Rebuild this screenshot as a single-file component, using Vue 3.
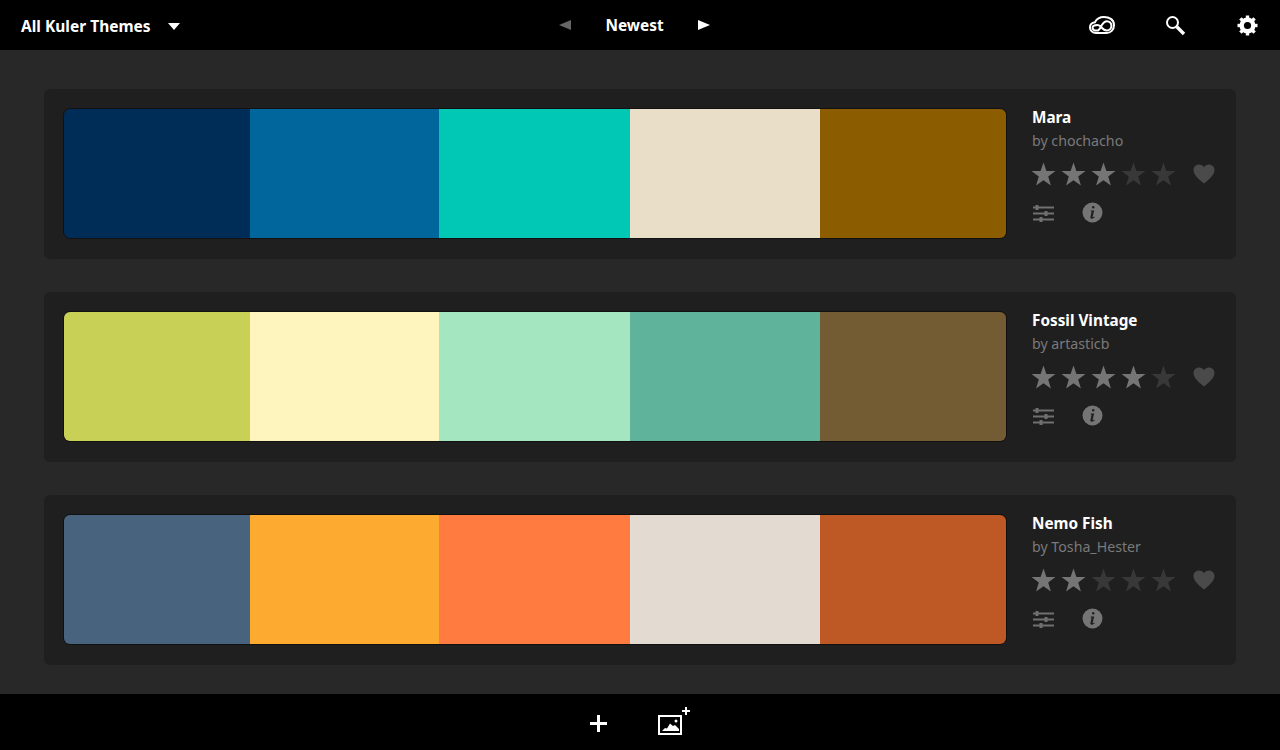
<script setup>
const themes = [
  { name: 'Mara', author: 'by chochacho', rating: 3, colors: ['#002c58', '#00669c', '#00c8b4', '#e9dec8', '#8c5c00'] },
  { name: 'Fossil Vintage', author: 'by artasticb', rating: 4, colors: ['#c8d055', '#fdf5bd', '#a3e6bf', '#5fb39a', '#735b33'] },
  { name: 'Nemo Fish', author: 'by Tosha_Hester', rating: 2, colors: ['#47637e', '#fdaa30', '#ff7b3f', '#e3dad2', '#be5925'] }
]
const star = 'M12.5 0.5 L15.4 9 L24.5 9 L17.2 14.5 L19.9 23.5 L12.5 18.2 L5.1 23.5 L7.8 14.5 L0.5 9 L9.6 9 Z'
</script>

<template>
  <div class="page">
    <header class="topbar">
      <div class="menu">
        <span class="menu-label">All Kuler Themes</span>
        <svg class="caret" width="12" height="7" viewBox="0 0 12 7"><path d="M0 0H12L6 7Z" fill="#fff" /></svg>
      </div>
      <div class="sorter">
        <svg width="12" height="10" viewBox="0 0 12 10"><path d="M0 5L12 0V10Z" fill="#666" /></svg>
        <span class="sort-label">Newest</span>
        <svg width="12" height="10" viewBox="0 0 12 10"><path d="M12 5L0 0V10Z" fill="#fff" /></svg>
      </div>
      <div class="tools">
        <svg class="cc" width="26" height="18" viewBox="0 0 26 18" fill="none" stroke="#fff" stroke-width="2">
          <path d="M7 17C3.5 17 1 14.5 1 11.5C1 8.5 3.2 6.5 6 6.2C7.5 3 11 1 15 1C20 1 25 3.5 25 9C25 14 21.5 17 17.5 17Z" />
          <path d="M8.5 9C10.8 9 11.8 10.6 13 12C14.2 13.4 15.6 14.4 17.8 14.4C20.4 14.4 22.4 12.4 22.4 9.8C22.4 7.2 20.4 5.2 17.8 5.2C15.4 5.2 14.2 7 13 8.8C11.8 10.6 10.6 14.6 8 14.6C5.4 14.6 3.6 13.4 3.6 11.7C3.6 10 6 9 8.5 9Z" stroke-width="2" />
        </svg>
        <svg class="search" width="21" height="21" viewBox="0 0 21 21" fill="none" stroke="#fff">
          <circle cx="7.5" cy="7.5" r="5.5" stroke-width="2" />
          <path d="M11.8 11.8L19 19" stroke-width="3.4" />
        </svg>
        <svg class="gear" width="21" height="21" viewBox="0 0 21 21">
          <circle cx="10.5" cy="10.5" r="6" fill="none" stroke="#fff" stroke-width="4" />
          <g stroke="#fff" stroke-width="3.4">
            <path d="M10.5 0.5V20.5" />
            <path d="M0.5 10.5H20.5" />
            <path d="M3.4 3.4L17.6 17.6" />
            <path d="M17.6 3.4L3.4 17.6" />
          </g>
          <circle cx="10.5" cy="10.5" r="3.6" fill="#000" />
        </svg>
      </div>
    </header>

    <main class="list">
      <article v-for="theme in themes" :key="theme.name" class="card">
        <div class="swatches">
          <div v-for="color in theme.colors" :key="color" class="swatch" :style="{ background: color }"></div>
        </div>
        <div class="info">
          <div class="name">{{ theme.name }}</div>
          <div class="author">{{ theme.author }}</div>
          <div class="rating">
            <svg v-for="n in 5" :key="n" class="star" width="25" height="24" viewBox="0 0 25 24">
              <path :d="star" :fill="n <= theme.rating ? '#757575' : '#383838'" />
            </svg>
            <svg class="heart" width="22" height="20" viewBox="0 0 22 20">
              <path d="M11 19.5C7 16 0.5 11.5 0.5 6C0.5 2.8 3 0.5 6 0.5C8 0.5 10 1.5 11 3.2C12 1.5 14 0.5 16 0.5C19 0.5 21.5 2.8 21.5 6C21.5 11.5 15 16 11 19.5Z" fill="#4a4a4a" />
            </svg>
          </div>
          <div class="actions">
            <svg class="sliders" width="22" height="18" viewBox="0 0 22 18" fill="#707070">
              <rect x="1" y="2.5" width="21" height="2" />
              <rect x="1" y="8.5" width="21" height="2" />
              <rect x="1" y="14.5" width="21" height="2" />
              <rect x="3.5" y="1" width="3" height="5" />
              <rect x="12.5" y="7" width="3" height="5" />
              <rect x="7.5" y="13" width="3" height="5" />
            </svg>
            <svg class="info-icon" width="21" height="21" viewBox="0 0 21 21">
              <circle cx="10.5" cy="10.5" r="10" fill="#757575" />
              <circle cx="11.2" cy="5.2" r="1.2" fill="#1f1f1f" />
              <path d="M8.8 8.6H12.2L10.7 14.6C10.5 15.5 11 15.7 12.4 14.6L12.7 15.2C11 17 7.9 17.4 8.4 15L9.6 9.7L8.6 9.3Z" fill="#1f1f1f" />
            </svg>
          </div>
        </div>
      </article>
    </main>

    <footer class="bottombar">
      <svg class="add" width="17" height="17" viewBox="0 0 17 17"><path d="M7 0H10V7H17V10H10V17H7V10H0V7H7Z" fill="#fff" /></svg>
      <svg class="add-image" width="34" height="28" viewBox="0 0 34 28">
        <rect x="1" y="9" width="22" height="18" fill="none" stroke="#fff" stroke-width="2" />
        <path d="M4 24L7 21L9 21.5L12 16.5L15 19L17 18L21 22V24Z" fill="#fff" />
        <circle cx="18" cy="14" r="1.5" fill="#fff" />
        <path d="M27 0H29V3H32V5H29V8H27V5H24V3H27Z" fill="#fff" />
      </svg>
    </footer>
  </div>
</template>

<style scoped>
.page {
  width: 1280px;
  height: 750px;
  display: flex;
  flex-direction: column;
  background: #282828;
  font-family: "Noto Sans", "Open Sans", sans-serif;
  overflow: hidden;
}
.topbar {
  height: 50px;
  flex: none;
  background: #000;
  display: grid;
  grid-template-columns: 1fr auto 1fr;
  align-items: center;
  color: #fff;
}
.menu {
  display: flex;
  align-items: center;
  padding-left: 21px;
  gap: 17px;
}
.menu-label {
  font-size: 15.5px;
  font-weight: 700;
  line-height: 22px;
  margin-top: 2px;
}
.caret {
  margin-top: 3px;
}
.sorter {
  display: flex;
  align-items: center;
  gap: 34px;
  padding-right: 11px;
}
.sort-label {
  font-size: 15.4px;
  font-weight: 700;
  line-height: 22px;
  margin-top: 2px;
}
.tools {
  display: flex;
  justify-content: flex-end;
  align-items: center;
  padding-right: 22px;
  gap: 51px;
}
.cc {
  margin-right: -1px;
}
.list {
  flex: 1;
  display: flex;
  flex-direction: column;
  gap: 33px;
  padding: 39px 44px 0;
}
.card {
  height: 170px;
  flex: none;
  background: #1f1f1f;
  border-radius: 6px;
  display: flex;
  padding: 19px 20px 19px 19px;
  box-sizing: border-box;
  gap: 25px;
}
.swatches {
  width: 944px;
  height: 131px;
  flex: none;
  box-sizing: border-box;
  border: 1px solid #111;
  border-radius: 7px;
  overflow: hidden;
  display: grid;
  grid-template-columns: 186px 189.4px 190.6px 190px 186px;
}
.info {
  flex: 1;
  min-width: 0;
  display: flex;
  flex-direction: column;
}
.name {
  font-size: 15.3px;
  font-weight: 700;
  line-height: 20px;
  color: #fff;
  margin-top: -1px;
}
.author {
  font-size: 14.2px;
  line-height: 20px;
  color: #7a7a7a;
  margin-top: 4px;
}
.rating {
  display: flex;
  align-items: center;
  gap: 5px;
  margin-top: 11px;
  margin-left: -1px;
  height: 24px;
}
.star,
.heart {
  flex: none;
}
.heart {
  margin-left: 12px;
}
.actions {
  display: flex;
  align-items: center;
  gap: 28px;
  margin-top: 16px;
}
.bottombar {
  height: 56px;
  flex: none;
  background: #000;
  display: flex;
  justify-content: center;
  align-items: center;
  gap: 51px;
  padding-left: 2px;
}
.add {
  margin-top: 3px;
}
.add-image {
  margin-top: -2px;
}
</style>
